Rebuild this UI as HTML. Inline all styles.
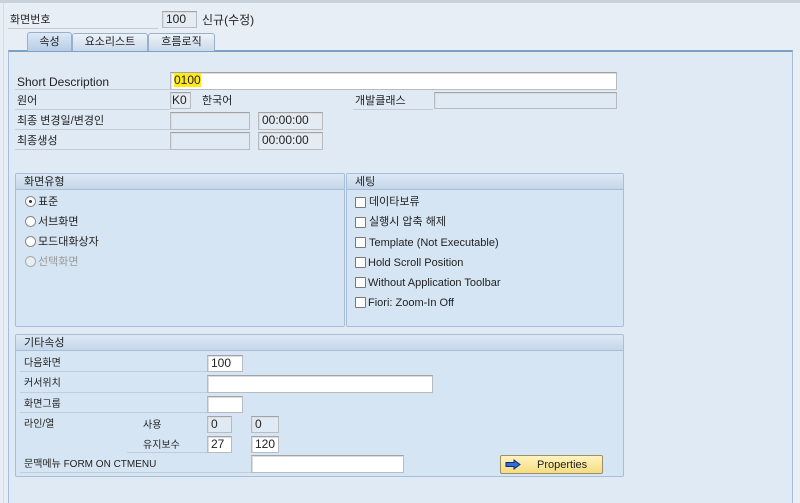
<!DOCTYPE html>
<html><head><meta charset="utf-8"><style>
*{box-sizing:border-box;margin:0;padding:0}
body{width:800px;height:503px;background:#e8eef6;position:relative;overflow:hidden;font-family:"Liberation Sans","Noto Sans CJK KR",sans-serif;font-size:11px;color:#222}
.a{position:absolute}
.t{position:absolute;font-size:11px;line-height:14px;white-space:nowrap}
.f{position:absolute;background:#fff;border:1px solid #b8bcc0;border-top-color:#a0a4a8;box-shadow:inset 1px 1px 0 #ddd;font-size:12px;line-height:15px;padding-left:3px}
.u{position:absolute;height:1px;background:#c4ccd6}
.tab{position:absolute;top:33px;height:18px;border:1px solid #9ab0c8;border-bottom:none;background:linear-gradient(#eef3f9,#c9d9ea);font-size:11px;line-height:16px;text-align:center;border-radius:3px 3px 0 0}
.grp{position:absolute;border:1px solid #a8bed8;background:#d6e5f3;border-radius:2px}
.gh{height:16px;background:linear-gradient(#dde8f4,#c5d7ea);border-bottom:1px solid #a8bed8;padding-left:8px;font-size:11px;line-height:17px}
.rb{position:absolute;width:11px;height:11px;border:1px solid #888;border-radius:50%;background:#fff}
.cb{position:absolute;width:11px;height:11px;border:1px solid #777;background:#fff;border-radius:1px}
</style></head><body>
<div class="a" style="left:0;top:0;width:800px;height:3px;background:#c9d1da"></div>
<div class="a" style="left:3px;top:3px;width:1px;height:500px;background:#d4dce6"></div>
<div class="t" style="left:10px;top:13px">화면번호</div>
<div class="u" style="left:8px;top:28px;width:150px"></div>
<div class="f" style="left:162px;top:11px;width:35px;height:17px;background:#e4ebf3">100</div>
<div class="t" style="left:202px;top:13px;font-size:12px">신규(수정)</div>

<div class="a" style="left:8px;top:50px;width:785px;height:453px;background:#dfeaf5;border-top:2px solid #7f9fc6;border-left:1px solid #a8bed8;border-right:1px solid #a8bed8"></div>
<div class="tab" style="left:27px;width:45px;background:linear-gradient(#dce8f5,#b6cde6);top:32px;height:19px;line-height:18px">속성</div>
<div class="tab" style="left:72px;width:76px">요소리스트</div>
<div class="tab" style="left:148px;width:67px">흐름로직</div>

<div class="t" style="left:17px;top:75px;font-size:12px">Short Description</div>
<div class="u" style="left:15px;top:89px;width:155px"></div>
<div class="f" style="left:170px;top:72px;width:447px;height:18px"><span style="background:#ffea20">0100</span></div>
<div class="t" style="left:17px;top:94px">원어</div>
<div class="u" style="left:15px;top:109px;width:155px"></div>
<div class="f" style="left:170px;top:92px;width:21px;height:17px;background:#e4ebf3;padding-left:1px">K0</div>
<div class="t" style="left:202px;top:94px">한국어</div>
<div class="t" style="left:355px;top:94px">개발클래스</div>
<div class="u" style="left:353px;top:109px;width:80px"></div>
<div class="f" style="left:434px;top:92px;width:183px;height:17px;background:#dfeaf5"></div>
<div class="t" style="left:17px;top:114px">최종 변경일/변경인</div>
<div class="u" style="left:15px;top:129px;width:155px"></div>
<div class="f" style="left:170px;top:112px;width:80px;height:18px;background:#dfeaf5"></div>
<div class="f" style="left:258px;top:112px;width:65px;height:18px;background:#e4ebf3">00:00:00</div>
<div class="t" style="left:17px;top:134px">최종생성</div>
<div class="u" style="left:15px;top:149px;width:155px"></div>
<div class="f" style="left:170px;top:132px;width:80px;height:18px;background:#dfeaf5"></div>
<div class="f" style="left:258px;top:132px;width:65px;height:18px;background:#e4ebf3">00:00:00</div>

<div class="grp" style="left:15px;top:173px;width:330px;height:154px"><div class="gh">화면유형</div></div>
<div class="rb" style="left:25px;top:196px"><div class="a" style="left:3px;top:3px;width:3px;height:3px;background:#333;border-radius:50%"></div></div>
<div class="t" style="left:38px;top:195px">표준</div>
<div class="rb" style="left:25px;top:216px"></div><div class="t" style="left:38px;top:215px">서브화면</div>
<div class="rb" style="left:25px;top:236px"></div><div class="t" style="left:38px;top:235px">모드대화상자</div>
<div class="rb" style="left:25px;top:256px;border-color:#aaa;background:#e8eef4"></div><div class="t" style="left:38px;top:255px;color:#999">선택화면</div>

<div class="grp" style="left:346px;top:173px;width:278px;height:154px"><div class="gh">세팅</div></div>
<div class="cb" style="left:355px;top:197px"></div><div class="t" style="left:369px;top:195px">데이타보류</div>
<div class="cb" style="left:355px;top:217px"></div><div class="t" style="left:369px;top:215px">실행시 압축 해제</div>
<div class="cb" style="left:355px;top:237px"></div><div class="t" style="left:369px;top:236px">Template (Not Executable)</div>
<div class="cb" style="left:355px;top:257px"></div><div class="t" style="left:368px;top:256px">Hold Scroll Position</div>
<div class="cb" style="left:355px;top:277px"></div><div class="t" style="left:368px;top:276px">Without Application Toolbar</div>
<div class="cb" style="left:355px;top:297px"></div><div class="t" style="left:368px;top:296px">Fiori: Zoom-In Off</div>

<div class="grp" style="left:15px;top:334px;width:609px;height:143px"><div class="gh">기타속성</div></div>
<div class="t" style="left:24px;top:357px;font-size:10px">다음화면</div>
<div class="u" style="left:20px;top:371px;width:187px"></div>
<div class="f" style="left:207px;top:355px;width:36px;height:17px">100</div>
<div class="t" style="left:24px;top:377px;font-size:10px">커서위치</div>
<div class="u" style="left:20px;top:392px;width:187px"></div>
<div class="f" style="left:207px;top:375px;width:226px;height:18px"></div>
<div class="t" style="left:24px;top:398px;font-size:10px">화면그룹</div>
<div class="u" style="left:20px;top:412px;width:187px"></div>
<div class="f" style="left:207px;top:396px;width:36px;height:17px"></div>
<div class="t" style="left:24px;top:418px;font-size:10px">라인/열</div>
<div class="t" style="left:143px;top:419px;font-size:10px">사용</div>
<div class="f" style="left:207px;top:416px;width:25px;height:17px;background:#dfeaf5">0</div>
<div class="f" style="left:251px;top:416px;width:28px;height:17px;background:#dfeaf5">0</div>
<div class="t" style="left:143px;top:439px;font-size:10px">유지보수</div>
<div class="u" style="left:127px;top:452px;width:80px"></div>
<div class="f" style="left:207px;top:436px;width:25px;height:17px">27</div>
<div class="f" style="left:251px;top:436px;width:28px;height:17px">120</div>
<div class="t" style="left:24px;top:458px;font-size:10px">문맥메뉴 FORM ON CTMENU</div>
<div class="u" style="left:20px;top:472px;width:231px"></div>
<div class="f" style="left:251px;top:455px;width:153px;height:18px"></div>
<div class="a" style="left:500px;top:455px;width:103px;height:19px;border:1px solid #9a8f6a;border-radius:2px;background:linear-gradient(#fff4c0,#f6dc80);font-size:11px;line-height:17px">
<svg class="a" style="left:4px;top:3px" width="16" height="11" viewBox="0 0 16 11"><path d="M1 3.5h8V1l6 4.5-6 4.5V7.5H1z" fill="#2f6fe0" stroke="#102a70" stroke-width="1"/></svg>
<span class="a" style="left:36px;top:1px">Properties</span></div>
</body></html>
